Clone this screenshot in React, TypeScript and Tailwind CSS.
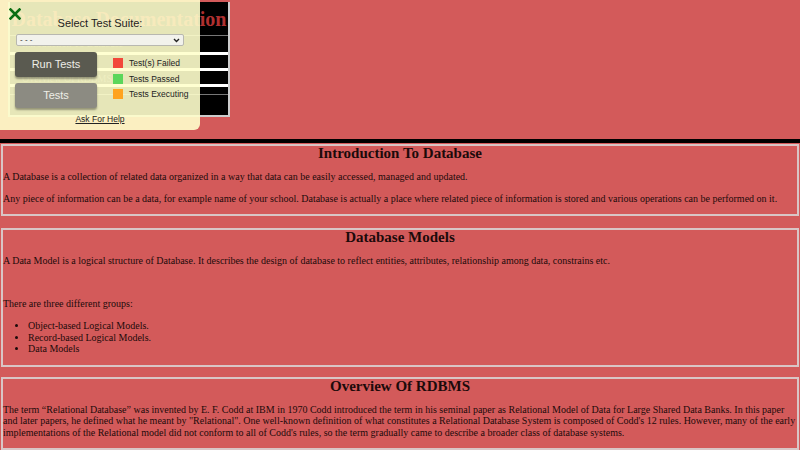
import React from 'react';

const navLinks = [
  { label: 'Introduction To Database', h: 'h-[17px]', border: 'border-t border-[#777]' },
  { label: 'Database Models', h: 'h-[16px]', border: 'border-t-[3px] border-white' },
  { label: 'Overview Of RDBMS', h: 'h-[16px]', border: 'border-t-[3px] border-white' },
  { label: "Codd's Rule", h: 'h-[10px]', border: 'border-t-[3px] border-white' },
  { label: 'Keys', h: 'h-[12px]', border: 'border-t border-[#777]' },
];

const legend = [
  { label: 'Test(s) Failed', color: 'bg-[#f2483a]' },
  { label: 'Tests Passed', color: 'bg-[#5bd65b]' },
  { label: 'Tests Executing', color: 'bg-[#ffa31f]' },
];

// Панель тестов поверх страницы
const TestSuite = () => (
  <div className="absolute left-0 top-0 z-20 h-[130px] w-[200px] rounded-br-[6px] bg-[rgba(255,255,204,0.9)] font-['Liberation_Sans',Arial,sans-serif] text-[#222]">
    <svg className="absolute left-[9px] top-[8px]" width="12" height="12" viewBox="0 0 12 12">
      <path d="M1.5 1.5 L10.5 10.5 M10.5 1.5 L1.5 10.5" stroke="#0b6e12" strokeWidth="2.6" strokeLinecap="square" />
    </svg>
    <div className="pt-[17px] text-center text-[11px] leading-[13px]">Select Test Suite:</div>
    <div className="ml-[16px] mt-[4px] flex h-[12px] w-[168px] items-center justify-between rounded-[2px] border border-[#b8b8b0] bg-[#f2f2ec] px-[3px] text-[8px] leading-none">
      <span>- - -</span>
      <svg width="7" height="5" viewBox="0 0 7 5">
        <path d="M1 1 L3.5 3.5 L6 1" stroke="#222" strokeWidth="1.4" fill="none" />
      </svg>
    </div>
    <div className="mt-[6px] flex pl-[15px]">
      <div className="flex w-[82px] flex-col gap-[6px]">
        <div className="flex h-[25px] items-center justify-center rounded-[3px] bg-[#5a5a50] text-[11px] text-[#eeeee6] shadow-[0_2px_2px_rgba(0,0,0,0.35)]">
          Run Tests
        </div>
        <div className="flex h-[25px] items-center justify-center rounded-[3px] bg-[#8c8b82] text-[11px] text-[#eeeee6] shadow-[0_2px_2px_rgba(0,0,0,0.35)]">
          Tests
        </div>
      </div>
      <div className="ml-[16px] flex flex-col gap-[5.5px] pt-[6px]">
        {legend.map((item) => (
          <div key={item.label} className="flex items-center gap-[6px]">
            <span className={`h-[10px] w-[10px] ${item.color}`} />
            <span className="text-[8.5px] leading-[10px]">{item.label}</span>
          </div>
        ))}
      </div>
    </div>
    <div className="mt-[6px] text-center text-[8.5px] leading-[10px] underline">Ask For Help</div>
  </div>
);

const NavBar = () => (
  <nav className="absolute left-[8px] top-[2px] z-10 h-[115px] w-[222px] overflow-hidden border-2 border-t-0 border-[#ccc] bg-black font-['Liberation_Serif','Times_New_Roman',serif]">
    <h1 className="flex h-[33px] items-center justify-center text-[20px] font-bold text-[#b03030]">
      Database Documentation
    </h1>
    {navLinks.map((link) => (
      <div key={link.label} className={`${link.border} ${link.h} overflow-hidden pl-[12px] text-[10px] leading-[16px] text-[#5a5a5a]`}>
        {link.label}
      </div>
    ))}
  </nav>
);

const Section = ({ title, children, className = '' }: { title: string; children: React.ReactNode; className?: string }) => (
  <section className={`border-2 border-[#d9c5c5] ${className}`}>
    <h2 className="m-0 text-center text-[15px] font-bold leading-[15px]">{title}</h2>
    {children}
  </section>
);

export default function App() {
  return (
    <div className="relative h-[450px] w-[800px] overflow-hidden bg-[#d35a5a] font-['Liberation_Serif','Times_New_Roman',serif] text-[#1c0a0a]">
      <NavBar />
      <TestSuite />

      <div className="h-[139px]" />
      <div className="h-[4px] bg-black" />

      <main className="px-[1px] pt-[1px] text-[10px] leading-[11.5px]">
        <Section title="Introduction To Database">
          <p className="my-[10px]">
            A Database is a collection of related data organized in a way that data can be easily accessed, managed and updated.
          </p>
          <p className="my-[10px]">
            Any piece of information can be a data, for example name of your school. Database is actually a place where related piece of information is stored and various operations can be performed on it.
          </p>
        </Section>

        <Section title="Database Models" className="mt-[12px]">
          <p className="my-[10px]">
            A Data Model is a logical structure of Database. It describes the design of database to reflect entities, attributes, relationship among data, constrains etc.
          </p>
          <p className="mb-[11px] mt-[31px]">There are three different groups:</p>
          <ul className="mb-[10px] mt-[11px] list-disc pl-[25px]">
            <li>Object-based Logical Models.</li>
            <li>Record-based Logical Models.</li>
            <li>Data Models</li>
          </ul>
        </Section>

        <Section title="Overview Of RDBMS" className="mt-[10px]">
          <p className="my-[10px]">
            The term “Relational Database” was invented by E. F. Codd at IBM in 1970 Codd introduced the term in his seminal paper as Relational Model of Data for Large Shared Data Banks. In this paper and later papers, he defined what he meant by "Relational". One well-known definition of what constitutes a Relational Database System is composed of Codd's 12 rules. However, many of the early implementations of the Relational model did not conform to all of Codd's rules, so the term gradually came to describe a broader class of database systems.
          </p>
        </Section>
      </main>
    </div>
  );
}
